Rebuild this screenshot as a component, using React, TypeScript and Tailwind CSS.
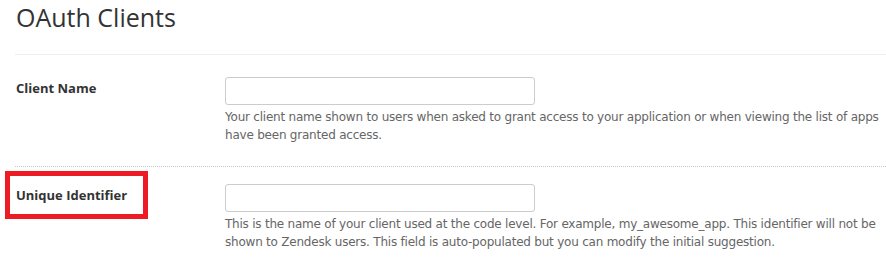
export default function App() {
  const help = "text-[12px] leading-[18px] tracking-[-0.22px] text-[#666] mt-[3px]";
  return (
    <div className="w-[886px] h-[266px] bg-white overflow-hidden" style={{ fontFamily: '"DejaVu Sans", sans-serif' }}>
      <div className="pl-[15px]">
        <h1 className="pl-[1px] pt-[2px] h-[55px] text-[25px] leading-[30px] text-[#333] border-b border-[#eeeeee]" style={{ fontFamily: '"Open Sans", sans-serif' }}>
          OAuth Clients
        </h1>
        <div className="h-[1px]" />
        <div className="flex pt-[21px] pb-[22px] border-b border-dotted border-[#c8c8c8]">
          <div className="w-[210px] pl-[1px] pt-[2px] text-[13px] font-bold text-[#333]" style={{ fontFamily: '"Open Sans", sans-serif' }}>
            Client Name
          </div>
          <div className="flex-1">
            <div className="w-[310px] h-[28px] border border-[#ccc] rounded-[3px]" />
            <div className={help}>
              Your client name shown to users when asked to grant access to your application or when viewing the list of apps have been granted access.
            </div>
          </div>
        </div>
        <div className="flex pt-[17px]">
          <div className="w-[210px] pl-[1px] pt-[2px] text-[13px] font-bold text-[#333] relative" style={{ fontFamily: '"Open Sans", sans-serif' }}>
            Unique Identifier
            <div className="absolute left-[-10px] top-[-13px] w-[143px] h-[48px] border-[5px] border-[#ed1c24]" />
          </div>
          <div className="flex-1">
            <div className="w-[310px] h-[28px] border border-[#ccc] rounded-[3px]" />
            <div className={help}>
              This is the name of your client used at the code level. For example, my_awesome_app. This identifier will not be shown to Zendesk users. This field is auto-populated but you can modify the initial suggestion.
            </div>
          </div>
        </div>
      </div>
    </div>
  );
}
